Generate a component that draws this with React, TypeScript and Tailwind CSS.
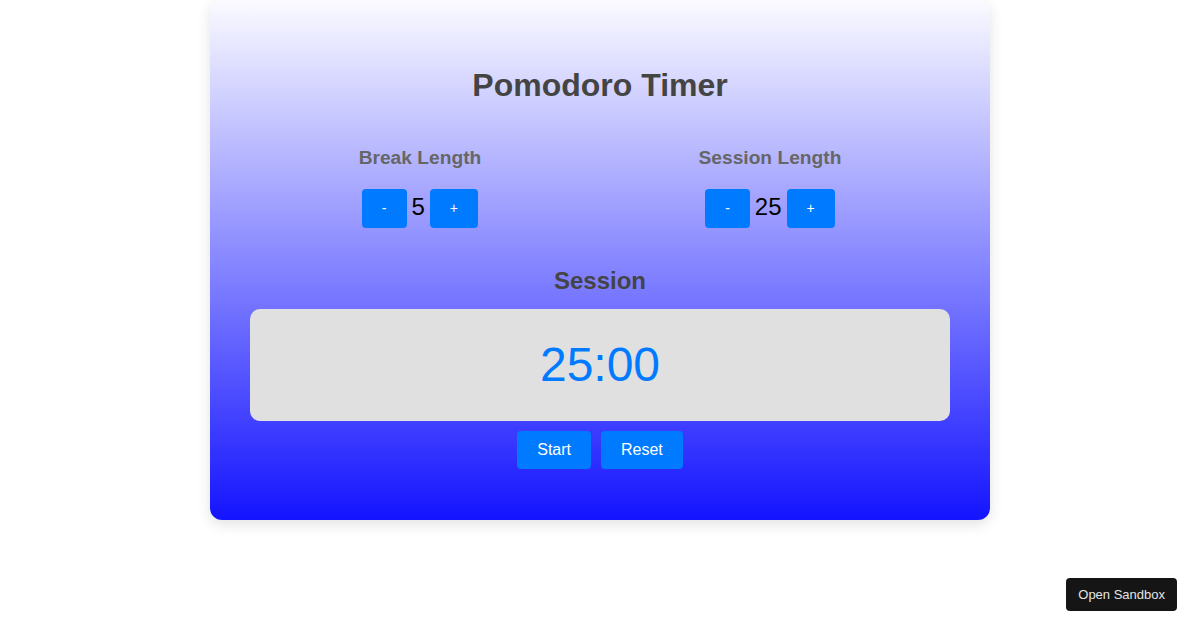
import { JSX } from "react";

const LengthControl = ({ label, value }: { label: string; value: number }): JSX.Element => {
  return (
    <div className="flex flex-col items-center">
      <div className="text-[19.2px] font-bold text-[#666666] h-[29px] leading-[29px]">{label}</div>
      <div className="flex items-center mt-[17px]">
        <button className="h-[39px] px-5 rounded bg-[#007bff] text-white text-[14px]">-</button>
        <span className="mx-[5px] pb-[4px] text-[24px] text-black leading-none">{value}</span>
        <button className="h-[39px] px-5 rounded bg-[#007bff] text-white text-[14px]">+</button>
      </div>
    </div>
  );
};

const App = (): JSX.Element => {
  return (
    <div className="relative w-full min-h-[630px] bg-white font-['Liberation_Sans',Arial,sans-serif]">
      <div className="w-[780px] h-[520px] mx-auto rounded-xl shadow-[0_4px_14px_rgba(0,0,0,0.12)] bg-[linear-gradient(to_bottom,#fbfbff,#1414ff)] px-10 pt-[61px] flex flex-col items-center">
        <h1 className="text-[32px] font-bold text-[#444444] h-[48px] leading-[48px]">Pomodoro Timer</h1>
        <div className="w-full flex justify-around mt-[34px]">
          <LengthControl label="Break Length" value={5} />
          <LengthControl label="Session Length" value={25} />
        </div>
        <div className="mt-[35px] text-[24px] font-bold text-[#444444] h-[36px] leading-[36px]">Session</div>
        <div className="mt-[10px] w-full h-[112px] rounded-[10px] bg-[#e0e0e0] flex items-center justify-center">
          <span className="text-[48px] text-[#007bff] leading-none">25:00</span>
        </div>
        <div className="mt-[10px] flex gap-[10px]">
          <button className="h-[38px] px-5 rounded bg-[#007bff] text-white text-[16px]">Start</button>
          <button className="h-[38px] px-5 rounded bg-[#007bff] text-white text-[16px]">Reset</button>
        </div>
      </div>
      <button className="fixed right-[23px] bottom-[19px] h-[33px] px-[12px] rounded bg-[#151515] text-[#e4e4e4] text-[13px]">
        Open Sandbox
      </button>
    </div>
  );
};

export default App;
